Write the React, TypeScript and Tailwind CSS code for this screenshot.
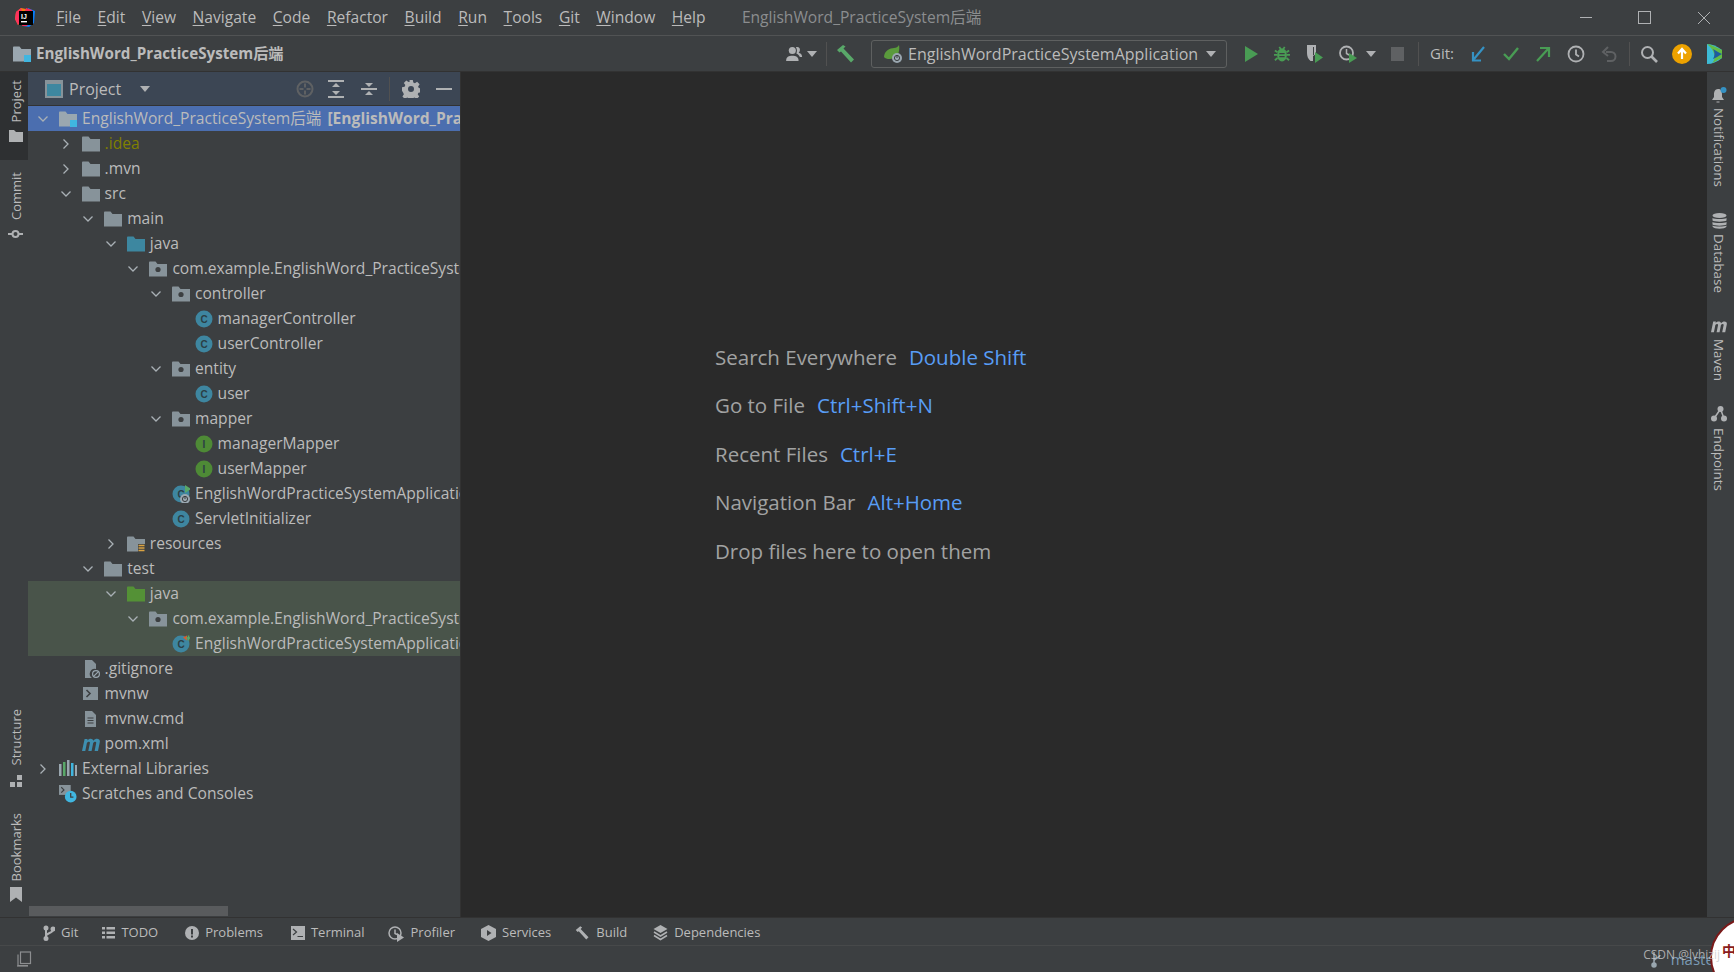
import type { ReactNode } from 'react';

const FONT = "font-['Open_Sans','Noto_Sans_CJK_SC',sans-serif]";

// tree data
type Row = {
  label: string;
  depth: number;
  open?: boolean;
  icon: string;
  extra?: string;
  color?: string;
  hl?: boolean;
  sel?: boolean;
};

const rows: Row[] = [
  { label: 'EnglishWord_PracticeSystem后端', extra: '[EnglishWord_PracticeSystem]', depth: 0, open: true, icon: 'module', sel: true },
  { label: '.idea', depth: 1, open: false, icon: 'folder', color: 'text-[#808000]' },
  { label: '.mvn', depth: 1, open: false, icon: 'folder' },
  { label: 'src', depth: 1, open: true, icon: 'folder' },
  { label: 'main', depth: 2, open: true, icon: 'folder' },
  { label: 'java', depth: 3, open: true, icon: 'source' },
  { label: 'com.example.EnglishWord_PracticeSystem', depth: 4, open: true, icon: 'pkg' },
  { label: 'controller', depth: 5, open: true, icon: 'pkg' },
  { label: 'managerController', depth: 6, icon: 'class' },
  { label: 'userController', depth: 6, icon: 'class' },
  { label: 'entity', depth: 5, open: true, icon: 'pkg' },
  { label: 'user', depth: 6, icon: 'class' },
  { label: 'mapper', depth: 5, open: true, icon: 'pkg' },
  { label: 'managerMapper', depth: 6, icon: 'iface' },
  { label: 'userMapper', depth: 6, icon: 'iface' },
  { label: 'EnglishWordPracticeSystemApplication', depth: 5, icon: 'app' },
  { label: 'ServletInitializer', depth: 5, icon: 'class' },
  { label: 'resources', depth: 3, open: false, icon: 'res' },
  { label: 'test', depth: 2, open: true, icon: 'folder' },
  { label: 'java', depth: 3, open: true, icon: 'testsrc', hl: true },
  { label: 'com.example.EnglishWord_PracticeSystem', depth: 4, open: true, icon: 'pkg', hl: true },
  { label: 'EnglishWordPracticeSystemApplicationTests', depth: 5, icon: 'testclass', hl: true },
  { label: '.gitignore', depth: 1, icon: 'ignore' },
  { label: 'mvnw', depth: 1, icon: 'shell' },
  { label: 'mvnw.cmd', depth: 1, icon: 'text' },
  { label: 'pom.xml', depth: 1, icon: 'maven' },
  { label: 'External Libraries', depth: 0, open: false, icon: 'libs' },
  { label: 'Scratches and Consoles', depth: 0, icon: 'scratch' },
];

const menu: [string, string][] = [
  ['F', 'ile'], ['E', 'dit'], ['V', 'iew'], ['N', 'avigate'], ['C', 'ode'], ['R', 'efactor'],
  ['B', 'uild'], ['R', 'un'], ['T', 'ools'], ['G', 'it'], ['W', 'indow'], ['H', 'elp'],
];

const hints = [
  ['Search Everywhere', 'Double Shift'],
  ['Go to File', 'Ctrl+Shift+N'],
  ['Recent Files', 'Ctrl+E'],
  ['Navigation Bar', 'Alt+Home'],
];

const FOLDER = 'M0 2.5C0 2 .4 1.5 1 1.5h5.5L8.5 4H18v12.5H0z';

function Folder({ fill, children }: { fill: string; children?: ReactNode }) {
  return (
    <svg width="18" height="18" viewBox="0 0 18 18">
      <path d={FOLDER} fill={fill} />
      {children}
    </svg>
  );
}

function Round({ fill, letter, children }: { fill: string; letter: string; children?: ReactNode }) {
  return (
    <svg width="18" height="18" viewBox="0 0 18 18">
      <circle cx="9" cy="9" r="8.5" fill={fill} />
      <text x="9" y="12.5" textAnchor="middle" fontSize="10" fontWeight="700" fill="#2b3f46" fontFamily="Liberation Sans">{letter}</text>
      {children}
    </svg>
  );
}

function SpringBadge({ x, y }: { x: number; y: number }) {
  return (
    <g transform={`translate(${x} ${y})`}>
      <circle cx="5" cy="5" r="5" fill="#9aa7b0" />
      <circle cx="5" cy="5" r="2.6" fill="none" stroke="#3c3f41" strokeWidth="1" />
      <path d="M5 2v3" stroke="#3c3f41" strokeWidth="1" />
    </g>
  );
}

function TreeIcon({ name }: { name: string }) {
  switch (name) {
    case 'module':
      return (
        <Folder fill="#9aa7b0">
          <rect x="11" y="10" width="7" height="7" fill="#40b6e0" />
        </Folder>
      );
    case 'source':
      return <Folder fill="#3d87a0" />;
    case 'testsrc':
      return <Folder fill="#549136" />;
    case 'folder':
      return <Folder fill="#87939a" />;
    case 'pkg':
      return (
        <Folder fill="#87939a">
          <circle cx="9" cy="9.5" r="2.6" fill="#3c3f41" />
        </Folder>
      );
    case 'res':
      return (
        <Folder fill="#87939a">
          <rect x="11" y="9" width="7" height="9" fill="#3c3f41" />
          <path d="M11.5 10.5h6M11.5 13h6M11.5 15.5h6" stroke="#d9a343" strokeWidth="1.5" />
        </Folder>
      );
    case 'class':
      return <Round fill="#3e86a0" letter="C" />;
    case 'iface':
      return <Round fill="#4e8a36" letter="I" />;
    case 'app':
      return (
        <Round fill="#3e86a0" letter="C">
          <path d="M13 0l6 4-6 4z" fill="#59a869" />
          <SpringBadge x={8} y={9} />
        </Round>
      );
    case 'testclass':
      return (
        <Round fill="#3e86a0" letter="C">
          <path d="M11 2.5l4-2v5z" fill="#e05a2b" />
          <path d="M14 3h5M16.5 .5v5" stroke="#59a869" strokeWidth="1.6" />
        </Round>
      );
    case 'ignore':
      return (
        <svg width="18" height="18" viewBox="0 0 18 18">
          <path d="M3 0h7l4 4v5a5 5 0 0 0-4 9H3z" fill="#87939a" />
          <circle cx="14" cy="14" r="3.4" fill="none" stroke="#9aa7b0" strokeWidth="1.2" />
          <path d="M11.8 16.2l4.4-4.4" stroke="#9aa7b0" strokeWidth="1.2" />
        </svg>
      );
    case 'shell':
      return (
        <svg width="18" height="18" viewBox="0 0 18 18">
          <rect x="1" y="2" width="15" height="13" fill="#87939a" />
          <path d="M4.5 5l3.5 3.5L4.5 12" fill="none" stroke="#3c3f41" strokeWidth="1.6" />
        </svg>
      );
    case 'text':
      return (
        <svg width="18" height="18" viewBox="0 0 18 18">
          <path d="M3 1h7l4 4v12H3z" fill="#87939a" />
          <path d="M5.5 8h6M5.5 10.5h6M5.5 13h6" stroke="#3c3f41" strokeWidth="1.1" />
        </svg>
      );
    case 'maven':
      return (
        <svg width="18" height="18" viewBox="0 0 18 18">
          <path d="M0 16L2.6 4h3l-.3 1.600C6.400 4.300 7.500 3.800 8.700 3.800c1.400 0 2.300.7 2.600 2C12.500 4.400 13.800 3.800 15 3.800c2 0 3.200 1.300 2.800 3.300L16 16h-3.400l1.600-7.900c.2-.9-.2-1.300-1-1.300-.7 0-1.500.5-2 1.100L9.600 16H6.300l1.600-7.900c.2-.9-.2-1.300-1-1.300-.7 0-1.500.5-2 1.100L3.300 16z" fill="#3e8fb0" />
        </svg>
      );
    case 'libs':
      return (
        <svg width="18" height="18" viewBox="0 0 18 18">
          <rect x="0" y="4" width="2.5" height="12" fill="#9aa7b0" />
          <rect x="4" y="2" width="2.5" height="14" fill="#59a869" />
          <rect x="8" y="0" width="2.5" height="16" fill="#9aa7b0" />
          <rect x="12" y="3" width="2.5" height="13" fill="#40b6e0" />
          <rect x="16" y="5" width="2" height="11" fill="#9aa7b0" />
        </svg>
      );
    default:
      return (
        <svg width="20" height="20" viewBox="0 0 20 20">
          <rect x="0" y="0" width="13" height="11" fill="#87939a" />
          <path d="M2.5 2.500l3 3-3 3" fill="none" stroke="#3c3f41" strokeWidth="1.3" />
          <circle cx="13" cy="13" r="6.5" fill="#40b6e0" />
          <path d="M13 9v4.500h3" fill="none" stroke="#3c3f41" strokeWidth="1.4" />
        </svg>
      );
  }
}

function TreeRow({ row }: { row: Row }) {
  const bg = row.sel ? 'bg-[#4b6eaf]' : row.hl ? 'bg-[#49544a]' : '';
  return (
    <div className={`relative flex h-[25px] items-center whitespace-nowrap pt-px ${bg}`} style={{ paddingLeft: 31 + row.depth * 22.6 }}>
      {row.open !== undefined && (
        <svg className="absolute top-[7px]" style={{ left: 9 + row.depth * 22.6 }} width="12" height="12" viewBox="0 0 12 12" fill="none" stroke="#a9b0b5" strokeWidth="1.3">
          <path d={row.open ? 'M1.5 3.500L6 8l4.500-4.500' : 'M3.500 1.500L8 6l-4.500 4.500'} />
        </svg>
      )}
      <span className="mr-[5px] flex w-[18px] shrink-0 items-center justify-center"><TreeIcon name={row.icon} /></span>
      <span className={row.color ?? 'text-[#bbbbbb]'}>{row.label}</span>
      {row.extra && <span className="ml-[6px] font-bold text-[#bbbbbb]">{row.extra}</span>}
    </div>
  );
}

function Cell({ w, children }: { w: number; children: ReactNode }) {
  return <div className="flex items-center justify-center" style={{ width: w }}>{children}</div>;
}

function Caret({ color = '#afb1b3' }: { color?: string }) {
  return (
    <svg width="10" height="6" viewBox="0 0 10 6"><path d="M0 0h10L5 6z" fill={color} /></svg>
  );
}

function LeafGear() {
  return (
    <svg width="20" height="20" viewBox="0 0 20 20">
      <path d="M1 13C1 7 7 4 11 4c2 0 4-1 5-3 1 5-.5 11-5 13-3 1.500-8 1.500-10-1z" fill="#5a9a3c" />
      <SpringBadge x={9} y={9} />
    </svg>
  );
}

function NavBar() {
  return (
    <div className="flex h-[36px] shrink-0 items-center border-b border-[#323232] bg-[#3c3f41] pr-[2px] text-[15.2px] text-[#bbbbbb]">
      <div className="ml-[13px] mr-[5px] flex"><TreeIcon name="module" /></div>
      <span className="font-bold">EnglishWord_PracticeSystem后端</span>
      <div className="ml-auto flex items-center">
        <svg width="18" height="16" viewBox="0 0 20 18" fill="#afb1b3">
          <circle cx="7" cy="5" r="4" />
          <path d="M0 17c0-5 3-6 7-6s7 1 7 6z" />
          <path d="M11 1.500c3-1 5 1 4.500 3.500-.3 1.500-1 2-1.500 2.500 2 .5 4 1.500 4 5h-2.500c-1-2-2.500-3.500-4-4 1-2 1-5-.5-7z" />
        </svg>
        <div className="ml-[3px]"><Caret /></div>
        <div className="mx-[9px] h-[24px] w-px bg-[#515151]" />
        <svg width="20" height="20" viewBox="0 0 20 20" fill="#59a869">
          <path d="M1 6L7 1l2.500 1.500L7.500 4.500 18 15.500 15 18.500 5 7.500 3.500 8.500z" />
        </svg>
        <div className="ml-[15px] flex h-[28px] w-[356px] items-center rounded-[3px] border border-[#5e6060] pl-[11px] pr-[10px]">
          <LeafGear />
          <span className="ml-[5px] flex-1 text-[16px]">EnglishWordPracticeSystemApplication</span>
          <Caret />
        </div>
        <Cell w={47}>
          <svg width="14" height="16" viewBox="0 0 14 16"><path d="M1 0l13 8-13 8z" fill="#499c54" /></svg>
        </Cell>
        <Cell w={16}>
          <svg width="18" height="18" viewBox="0 0 18 18" fill="#499c54">
            <ellipse cx="9" cy="10" rx="5.500" ry="7.500" />
            <path d="M1 5l3 2M17 5l-3 2M0 10h4M18 10h-4M1 16l3-2.500M17 16l-3-2.500M6 1l1.500 2.500M12 1l-1.500 2.500" stroke="#499c54" strokeWidth="2" />
            <path d="M6 8.500h6M6 12h6" stroke="#3c3f41" strokeWidth="1.4" />
          </svg>
        </Cell>
        <Cell w={47}>
          <svg width="20" height="20" viewBox="0 0 20 20">
            <path d="M3 1h9v9l-3 2v5H6.500C4 15 3 12 3 9z" fill="#afb1b3" />
            <path d="M9 3h1v8H9z" fill="#3c3f41" />
            <path d="M11 8l8 5.500-8 5.500z" fill="#499c54" />
          </svg>
        </Cell>
        <Cell w={24}>
          <svg width="22" height="20" viewBox="0 0 22 20">
            <circle cx="8.5" cy="9" r="6.5" fill="none" stroke="#afb1b3" strokeWidth="1.8" />
            <path d="M8.500 5v4.500l2.500 1.500" fill="none" stroke="#afb1b3" strokeWidth="1.5" />
            <path d="M11 9l8 5-8 5z" fill="#499c54" />
          </svg>
        </Cell>
        <Cell w={19}><Caret /></Cell>
        <Cell w={35}><div className="h-[14px] w-[13px] bg-[#5f6163]" /></Cell>
        <div className="mx-[3px] h-[24px] w-px bg-[#515151]" />
        <span className="ml-[8px] w-[27px] text-[15px]">Git:</span>
        <Cell w={42}>
          <svg width="14" height="16" viewBox="0 0 14 16" fill="none" stroke="#3592c4" strokeWidth="2.2">
            <path d="M13 1L3 13M2 6v8.500h8" />
          </svg>
        </Cell>
        <Cell w={24}>
          <svg width="16" height="14" viewBox="0 0 16 14" fill="none" stroke="#499c54" strokeWidth="2.4"><path d="M1 7l5 5L15 1" /></svg>
        </Cell>
        <Cell w={40}>
          <svg width="15" height="16" viewBox="0 0 15 16" fill="none" stroke="#499c54" strokeWidth="2.2"><path d="M1 15L12 3M4 2h9v9" /></svg>
        </Cell>
        <Cell w={25}>
          <svg width="18" height="18" viewBox="0 0 18 18" fill="none" stroke="#afb1b3" strokeWidth="1.8">
            <circle cx="9" cy="9" r="7.5" /><path d="M9 4.500V9.500l3 2" />
          </svg>
        </Cell>
        <Cell w={41}>
          <svg width="16" height="18" viewBox="0 0 16 18" fill="none" stroke="#5f6163" strokeWidth="2">
            <path d="M5 7h5a4.500 4.500 0 0 1 0 9H6M7 2L2 7l5 4" />
          </svg>
        </Cell>
        <div className="h-[24px] w-px bg-[#515151]" />
        <Cell w={38}>
          <svg width="18" height="18" viewBox="0 0 18 18" fill="none" stroke="#afb1b3" strokeWidth="2">
            <circle cx="7.5" cy="7.5" r="5.5" /><path d="M11.500 11.500L17 17" strokeWidth="2.6" />
          </svg>
        </Cell>
        <Cell w={28}>
          <svg width="20" height="20" viewBox="0 0 20 20">
            <circle cx="10" cy="10" r="10" fill="#eda200" />
            <path d="M10 15V6M6 9.500L10 5l4 4.500" fill="none" stroke="#fff" strokeWidth="2.2" />
          </svg>
        </Cell>
        <Cell w={36}>
          <svg width="20" height="20" viewBox="0 0 20 20">
            <path d="M3 0c5 0 10 2 15 6v8c-5 4-10 6-15 6z" fill="#3dbbd6" />
            <path d="M3 0c6 1 10 4 15 6v8c-5 2-7 4-10 5 4-3 4-12-5-19z" fill="#63bb44" />
            <path d="M9 5c3 2 5 3 9 5-4 2-6 4-9 5 2-3 2-7 0-10z" fill="#1e5a9e" />
          </svg>
        </Cell>
      </div>
    </div>
  );
}

function LeftStrip() {
  return (
    <div className="flex w-[28px] shrink-0 flex-col justify-between bg-[#3c3f41]">
      <div className="flex flex-col">
        <div className="flex h-[88px] flex-col items-center bg-[#2e3032] pl-[3px] pt-[8px]">
          <span className="text-[13px] leading-[16px] text-[#bbbbbb] [writing-mode:vertical-rl] rotate-180">Project</span>
          <svg className="mt-[7px]" width="14" height="14" viewBox="0 0 14 14"><path d="M0 1h5l2 2h7v10H0z" fill="#afb1b3" /></svg>
        </div>
        <div className="flex flex-col items-center pl-[3px] pt-[12px]">
          <span className="text-[13px] leading-[16px] text-[#bbbbbb] [writing-mode:vertical-rl] rotate-180">Commit</span>
          <svg className="mt-[7px]" width="15" height="14" viewBox="0 0 15 14" fill="none" stroke="#afb1b3" strokeWidth="2">
            <circle cx="7.5" cy="7" r="3" /><path d="M0 7h4M11 7h4" />
          </svg>
        </div>
      </div>
      <div className="flex flex-col items-center pb-[15px] pl-[3px]">
        <span className="text-[13px] leading-[16px] text-[#bbbbbb] [writing-mode:vertical-rl] rotate-180">Structure</span>
        <svg className="mt-[9px]" width="14" height="12" viewBox="0 0 14 12" fill="#afb1b3">
          <rect x="8" y="0" width="5" height="5" /><rect x="1" y="7" width="5" height="5" /><rect x="8" y="7" width="5" height="5" />
        </svg>
        <span className="mt-[26px] text-[13px] leading-[16px] text-[#bbbbbb] [writing-mode:vertical-rl] rotate-180">Bookmarks</span>
        <svg className="mt-[6px]" width="12" height="15" viewBox="0 0 12 15" fill="#afb1b3"><path d="M0 0h12v15L6 10.500 0 15z" /></svg>
      </div>
    </div>
  );
}

function RightStrip() {
  return (
    <div className="flex w-[27px] shrink-0 flex-col items-center bg-[#3c3f41] pr-[3px] pt-[15px]">
      <svg width="16" height="16" viewBox="0 0 16 16">
        <path d="M7 2c-3 0-4 3-4 5v3l-2 3h12l-2-3V7c0-3-1-5-4-5zM5.500 14.500h3v1h-3z" fill="#afb1b3" />
        <circle cx="12.5" cy="3" r="3" fill="#3592c4" />
      </svg>
      <span className="mt-[5px] text-[13.4px] leading-[16px] text-[#bbbbbb] [writing-mode:vertical-rl]">Notifications</span>
      <svg className="mt-[26px]" width="15" height="16" viewBox="0 0 15 16" fill="#afb1b3">
        <ellipse cx="7.5" cy="2.5" rx="7" ry="2.5" />
        <path d="M.5 5c1.500 1.300 12.500 1.300 14 0v2.500c-1.500 1.500-12.500 1.500-14 0zM.5 9c1.500 1.300 12.500 1.300 14 0v2.500c-1.500 1.500-12.500 1.500-14 0zM.5 12.500c1.500 1.300 12.500 1.300 14 0v1c-1.500 3-12.500 3-14 0z" />
      </svg>
      <span className="mt-[5px] text-[13.4px] leading-[16px] text-[#bbbbbb] [writing-mode:vertical-rl]">Database</span>
      <svg className="mt-[27px]" width="16" height="13" viewBox="0 0 18 13" fill="#afb1b3">
        <path d="M0 13L2.500 1h3l-.3 1.500C6.400 1.300 7.500.8 8.700.8c1.400 0 2.300.7 2.600 2C12.500 1.400 13.800.8 15 .8c2 0 3.200 1.300 2.800 3.300L16 13h-3.400l1.600-7.900c.2-.9-.2-1.300-1-1.300-.7 0-1.500.5-2 1.100L9.600 13H6.300l1.600-7.900c.2-.9-.2-1.300-1-1.300-.7 0-1.500.5-2 1.100L3.300 13z" />
      </svg>
      <span className="mt-[6px] text-[13.4px] leading-[16px] text-[#bbbbbb] [writing-mode:vertical-rl]">Maven</span>
      <svg className="mt-[25px]" width="16" height="16" viewBox="0 0 16 16" fill="#afb1b3">
        <circle cx="9.5" cy="3" r="3" /><circle cx="3" cy="12.500" r="3" /><circle cx="13" cy="12.500" r="3" />
        <path d="M9.500 3L3 12.500M9.500 3L13 12.500" stroke="#afb1b3" strokeWidth="1.5" />
      </svg>
      <span className="mt-[6px] text-[13.4px] leading-[16px] text-[#bbbbbb] [writing-mode:vertical-rl]">Endpoints</span>
    </div>
  );
}

function ProjectPanel() {
  return (
    <div className="relative flex w-[433px] shrink-0 flex-col border-r border-[#323232] bg-[#3c3f41] text-[15.6px]">
      <div className="flex h-[34px] shrink-0 items-center border-b border-[#323232] bg-[#3c4654] pl-[17px] text-[#bbbbbb]">
        <svg width="18" height="18" viewBox="0 0 18 18">
          <rect x="0" y="0" width="18" height="18" fill="#87939a" />
          <rect x="2" y="4" width="14" height="12" fill="#3d87a0" />
        </svg>
        <span className="ml-[6px] text-[16px]">Project</span>
        <div className="ml-[19px]"><Caret /></div>
        <div className="ml-auto flex items-center pr-[8px]">
          <svg width="18" height="18" viewBox="0 0 18 18" fill="none" stroke="#5f6163" strokeWidth="2">
            <circle cx="9" cy="9" r="7.5" /><path d="M9 3.500v4M9 10.500v4M3.500 9h4M10.500 9h4" />
          </svg>
          <svg className="ml-[14px]" width="16" height="18" viewBox="0 0 16 18" fill="#afb1b3">
            <rect x="0" y="0" width="16" height="2" /><rect x="0" y="16" width="16" height="2" />
            <path d="M8 3l4 4H4zM8 15l4-4H4z" />
          </svg>
          <svg className="ml-[17px]" width="16" height="16" viewBox="0 0 16 16" fill="#afb1b3">
            <rect x="0" y="7" width="16" height="2" /><path d="M8 6L4 2h8zM8 10l4 4H4z" />
          </svg>
          <div className="ml-[12px] h-[24px] w-px bg-[#515151]" />
          <svg className="ml-[12px]" width="18" height="18" viewBox="0 0 18 18" fill="#afb1b3">
            <path fillRule="evenodd" d="M7.200 0h3.600l.5 2.600 1.600.7 2.200-1.500 2.500 2.500-1.500 2.200.7 1.600 2.200.5v3.600l-2.600.5-.7 1.600 1.500 2.200-2.500 2.500-2.200-1.500-1.600.7-.5 2.600H7.200l-.5-2.600-1.600-.7-2.200 1.500-2.500-2.500 1.500-2.200-.7-1.600L0 10.800V7.200l2.600-.5.7-1.600-1.500-2.200 2.500-2.500 2.200 1.500 1.600-.7zM9 6a3 3 0 1 0 0 6 3 3 0 0 0 0-6z" />
          </svg>
          <div className="ml-[16px] h-[2px] w-[16px] bg-[#afb1b3]" />
        </div>
      </div>
      <div className="min-h-0 flex-1 overflow-hidden">
        {rows.map((row, i) => <TreeRow key={i} row={row} />)}
      </div>
      <div className="absolute bottom-[1px] left-[1px] h-[10px] w-[199px] bg-[#595b5d]" />
    </div>
  );
}

function Editor() {
  return (
    <div className="flex min-w-0 flex-1 flex-col bg-[#2a2a2a] pl-[254px] pt-[271px] text-[20.5px]">
      {hints.map(([a, b]) => (
        <div key={a} className="mb-[20.5px] flex h-[28px] items-center gap-[12px]">
          <span className="text-[#a1a2a2]">{a}</span>
          <span className="text-[#589df6]">{b}</span>
        </div>
      ))}
      <div className="flex h-[28px] items-center text-[#a1a2a2]">Drop files here to open them</div>
    </div>
  );
}

function BottomTab({ ml, icon, label }: { ml: number; icon: ReactNode; label: string }) {
  return (
    <div className="flex items-center" style={{ marginLeft: ml }}>
      <span className="mr-[6px] flex items-center">{icon}</span>
      <span>{label}</span>
    </div>
  );
}

function ToolBar() {
  const c = '#afb1b3';
  return (
    <div className="flex h-[28px] shrink-0 items-center border-t border-[#323232] bg-[#3c3f41] pt-[3px] text-[13px] text-[#bbbbbb]">
      <BottomTab ml={43} label="Git" icon={
        <svg width="12" height="16" viewBox="0 0 12 16" fill="none" stroke={c} strokeWidth="2">
          <circle cx="3" cy="3" r="1.5" fill={c} /><circle cx="3" cy="13.5" r="1.5" fill={c} /><circle cx="10" cy="4" r="1.5" fill={c} />
          <path d="M3 3v10M3 11c0-3 7-3 7-6" />
        </svg>
      } />
      <BottomTab ml={24} label="TODO" icon={
        <svg width="13" height="12" viewBox="0 0 13 12" fill={c}>
          <rect y="0" width="3" height="2.5" /><rect y="4.5" width="3" height="2.5" /><rect y="9" width="3" height="2.5" />
          <rect x="4.5" y="0" width="8.5" height="2.5" /><rect x="4.5" y="4.5" width="8.5" height="2.5" /><rect x="4.5" y="9" width="8.5" height="2.5" />
        </svg>
      } />
      <BottomTab ml={27} label="Problems" icon={
        <svg width="14" height="14" viewBox="0 0 14 14">
          <circle cx="7" cy="7" r="7" fill={c} /><rect x="6" y="3" width="2" height="5.5" fill="#3c3f41" /><rect x="6" y="9.5" width="2" height="2" fill="#3c3f41" />
        </svg>
      } />
      <BottomTab ml={28} label="Terminal" icon={
        <svg width="14" height="14" viewBox="0 0 14 14">
          <rect width="14" height="14" fill={c} /><path d="M2 3l3.500 3L2 9M6.500 10.500H12" fill="none" stroke="#3c3f41" strokeWidth="1.2" />
        </svg>
      } />
      <BottomTab ml={23} label="Profiler" icon={
        <svg width="17" height="17" viewBox="0 0 17 17" fill="none" stroke={c} strokeWidth="1.5">
          <circle cx="7" cy="8" r="6" /><path d="M7 4.500v4l2 1" />
          <path d="M9 8l7 4.500L9 17z" fill={c} stroke="none" />
        </svg>
      } />
      <BottomTab ml={26} label="Services" icon={
        <svg width="15" height="16" viewBox="0 0 15 16">
          <path d="M7.500 0L15 4v8l-7.500 4L0 12V4z" fill={c} /><path d="M6 5l4.500 3L6 11z" fill="#3c3f41" />
        </svg>
      } />
      <BottomTab ml={24} label="Build" icon={
        <svg width="15" height="16" viewBox="0 0 20 20" fill={c}><path d="M1 6L7 1l2.500 1.500L7.500 4.500 18 15.500 15 18.500 5 7.500 3.500 8.500z" /></svg>
      } />
      <BottomTab ml={26} label="Dependencies" icon={
        <svg width="15" height="16" viewBox="0 0 15 16" fill={c}>
          <path d="M7.500 0l7 4-7 4-7-4z" /><path d="M1 7l6.500 4L14 7M1 10.500l6.500 4 6.500-4" fill="none" stroke={c} strokeWidth="1.5" />
        </svg>
      } />
    </div>
  );
}

function StatusBar() {
  return (
    <div className="flex h-[27px] shrink-0 items-center border-t border-[#47494a] bg-[#3c3f41] pl-[16px] text-[15px]">
      <svg width="16" height="16" viewBox="0 0 16 16" fill="none" stroke="#8c8e90" strokeWidth="1.2">
        <rect x="4.5" y="1" width="10" height="11.5" /><path d="M2 3.500v11h10" /><path d="M1 15h11" />
      </svg>
      <div className="ml-auto mr-[14px] flex items-center text-[#7a9ab5]">
        <svg className="mr-[8px]" width="12" height="18" viewBox="0 0 12 18" fill="none" stroke="#9aa7b0" strokeWidth="1.5">
          <circle cx="3" cy="15" r="2" fill="#9aa7b0" /><path d="M3 2v12M3 11c0-3 6-3 6-6" />
        </svg>
        <span>master</span>
      </div>
    </div>
  );
}

export default function App() {
  return (
    <div className={`relative flex h-[972px] w-[1734px] flex-col overflow-hidden bg-[#3c3f41] ${FONT}`}>
      <div className="flex h-[36px] shrink-0 items-center border-b border-[#515354] text-[15.6px]">
        <svg className="ml-[14px]" width="22" height="22" viewBox="0 0 22 22">
          <path d="M2 5l5-4 5 1-1 8-7 8-3-6z" fill="#f97a12" />
          <path d="M2 5l5-4 2 8-5 9-3-6z" fill="#fe315d" />
          <path d="M14 1l7 3-1 12-5 4-6-1z" fill="#087cfa" />
          <path d="M12 1l6 2 1 7-6 9H8z" fill="#fe2857" />
          <rect x="5" y="4" width="14" height="14" fill="#000" />
          <rect x="7" y="14" width="6" height="1.4" fill="#fff" />
          <text x="7" y="11.5" fontSize="7" fontWeight="700" fill="#fff" fontFamily="Liberation Sans">IJ</text>
        </svg>
        <nav className="ml-[12px] flex text-[#bbbbbb]">
          {menu.map(([k, rest], i) => (
            <span key={i} className="px-[8.3px]"><span className="underline underline-offset-2">{k}</span>{rest}</span>
          ))}
        </nav>
        <span className="ml-[28px] text-[#8b8d8f]">EnglishWord_PracticeSystem后端</span>
        <div className="ml-auto flex items-center">
          <div className="flex w-[56px] items-center justify-center"><div className="h-px w-[12px] bg-[#afb1b3]" /></div>
          <Cell w={60}><div className="h-[13px] w-[13px] border border-[#afb1b3]" /></Cell>
          <Cell w={60}>
            <svg width="14" height="14" viewBox="0 0 14 14" fill="none" stroke="#afb1b3" strokeWidth="1"><path d="M1 1l12 12M13 1L1 13" /></svg>
          </Cell>
        </div>
      </div>
      <NavBar />
      <div className="flex min-h-0 flex-1">
        <LeftStrip />
        <ProjectPanel />
        <Editor />
        <RightStrip />
      </div>
      <ToolBar />
      <StatusBar />
      <div className="absolute bottom-[-25px] left-[1710px] flex h-[80px] w-[80px] rounded-full border-2 border-[#7a1a1a] bg-white pl-[10px] pt-[23px]">
        <span className="font-['Noto_Sans_CJK_SC',sans-serif] text-[14px] font-bold leading-[16px] text-[#8a1c1c]">中</span>
      </div>
      <span className="absolute bottom-[9px] right-[14px] text-[12px] leading-[16px] text-[#c9c9c9]/80">CSDN @lvhizij</span>
    </div>
  );
}
